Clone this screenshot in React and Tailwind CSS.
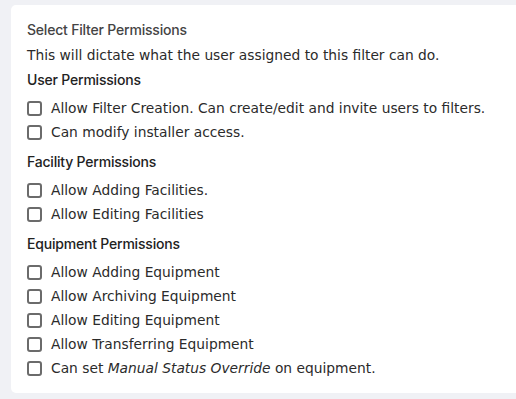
import React from 'react'

const sections = [
  {
    title: 'User Permissions',
    items: [
      'Allow Filter Creation. Can create/edit and invite users to filters.',
      'Can modify installer access.',
    ],
  },
  {
    title: 'Facility Permissions',
    items: ['Allow Adding Facilities.', 'Allow Editing Facilities'],
  },
  {
    title: 'Equipment Permissions',
    items: [
      'Allow Adding Equipment',
      'Allow Archiving Equipment',
      'Allow Editing Equipment',
      'Allow Transferring Equipment',
      <>
        Can set <em>Manual Status Override</em> on equipment.
      </>,
    ],
  },
]

const Checkbox = ({ label }) => (
  <label className="flex items-center h-6 gap-[9px]">
    <span className="block w-[15px] h-[15px] border-2 border-[#6b6b6b] rounded-[3px] bg-white shrink-0" />
    <span className="text-[13.8px] text-[#2b2b2b] font-['DejaVu_Sans',sans-serif]">{label}</span>
  </label>
)

export default function App() {
  return (
    <div className="min-h-[399px] bg-[#f0f1f5] pt-[5px] pl-[11px]">
      <div className="bg-white rounded-l-[5px] pl-4 pt-[15px] h-[388px]">
        <h2 className="text-[14px] leading-5 text-[#444] font-['Inter',sans-serif] font-medium tracking-[-0.2px]">
          Select Filter Permissions
        </h2>
        <p className="mt-[5px] text-[13.8px] leading-5 text-[#2b2b2b] font-['DejaVu_Sans',sans-serif]">
          This will dictate what the user assigned to this filter can do.
        </p>
        {sections.map((s, i) => (
          <div key={s.title} className={i === 0 ? 'mt-[5px]' : 'mt-[8px]'}>
            <h3 className="text-[14px] leading-5 text-[#222] font-['Inter',sans-serif] font-medium tracking-[-0.2px] mb-[6px]">
              {s.title}
            </h3>
            <div className="flex flex-col">
              {s.items.map((it, j) => (
                <Checkbox key={j} label={it} />
              ))}
            </div>
          </div>
        ))}
      </div>
    </div>
  )
}
